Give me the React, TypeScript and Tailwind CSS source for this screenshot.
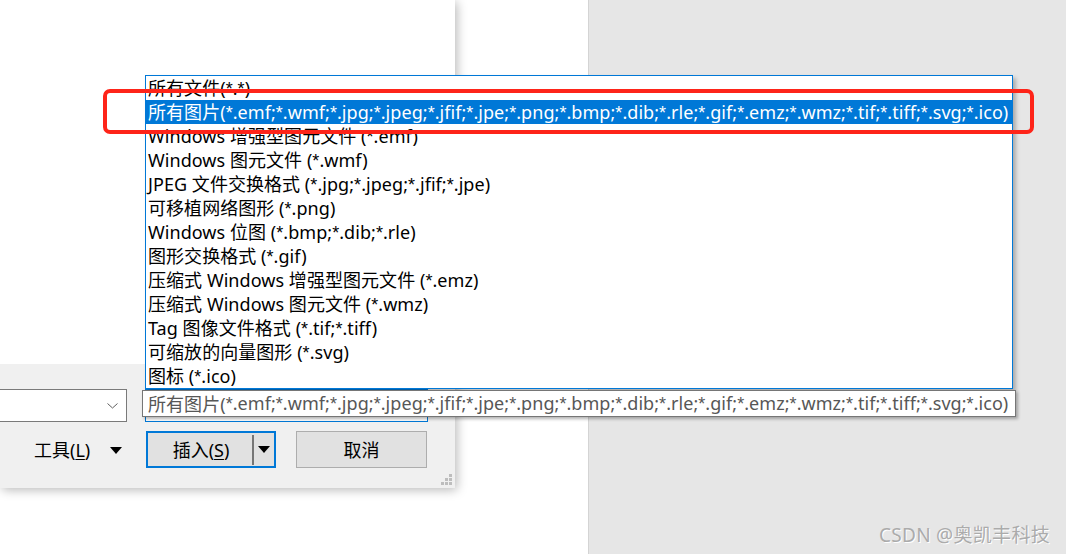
const FONT = 'font-["Noto_Sans","Noto_Sans_CJK_SC",sans-serif]'

const ALL_IMAGES =
  '所有图片(*.emf;*.wmf;*.jpg;*.jpeg;*.jfif;*.jpe;*.png;*.bmp;*.dib;*.rle;*.gif;*.emz;*.wmz;*.tif;*.tiff;*.svg;*.ico)'

const TYPES = [
  '所有文件(*.*)',
  ALL_IMAGES,
  'Windows 增强型图元文件 (*.emf)',
  'Windows 图元文件 (*.wmf)',
  'JPEG 文件交换格式 (*.jpg;*.jpeg;*.jfif;*.jpe)',
  '可移植网络图形 (*.png)',
  'Windows 位图 (*.bmp;*.dib;*.rle)',
  '图形交换格式 (*.gif)',
  '压缩式 Windows 增强型图元文件 (*.emz)',
  '压缩式 Windows 图元文件 (*.wmz)',
  'Tag 图像文件格式 (*.tif;*.tiff)',
  '可缩放的向量图形 (*.svg)',
  '图标 (*.ico)',
]

// the UI font has a narrow asterisk, Noto's is much wider
function Label({ text }: { text: string }) {
  const parts = text.split('*')
  return (
    <>
      {parts.map((p, i) => (
        <span key={i}>
          {i > 0 && <span className='font-["Liberation_Sans",sans-serif]'>*</span>}
          {p}
        </span>
      ))}
    </>
  )
}

function Caret({ className = '' }: { className?: string }) {
  return (
    <svg width="12" height="7" viewBox="0 0 12 7" className={className}>
      <path d="M0 0h12L6 7z" fill="#000" />
    </svg>
  )
}

function Grip() {
  const dots = [
    [8, 0],
    [4, 4], [8, 4],
    [0, 8], [4, 8], [8, 8],
  ]
  return (
    <svg width="11" height="11" viewBox="0 0 11 11">
      {dots.map(([x, y], i) => (
        <rect key={i} x={x} y={y} width="3" height="3" fill="#bdbdbd" />
      ))}
    </svg>
  )
}

export default function App() {
  return (
    <div className={`relative w-[1066px] h-[554px] overflow-hidden flex bg-white text-[18px] ${FONT}`}>
      {/* word window behind the dialog */}
      <div className="w-[588px] h-full bg-white relative">
        <div className="w-[455px] h-[488px] flex flex-col bg-white shadow-[2px_2px_10px_rgba(0,0,0,0.28)]">
          <div className="flex-1" />
          {/* dialog footer */}
          <div className="h-[124px] bg-[#f0f0f0] pt-[25px] relative">
            <div className="flex items-stretch h-[33px]">
              <div className="w-[127px] border-y border-r border-[#7a7a7a] bg-white flex items-center justify-end pr-[8px]">
                <svg width="11" height="6" viewBox="0 0 11 6">
                  <path d="M0.5 0.5L5.5 5L10.5 0.5" fill="none" stroke="#606060" strokeWidth="1" />
                </svg>
              </div>
              <div className="ml-[18px] w-[283px] border border-[#0078d7] bg-white" />
            </div>
            <div className="flex items-center h-[37px] mt-[9px]">
              <div className="w-[146px] flex items-center pl-[34px]">
                <span className="text-black leading-none">
                  工具(<span className="underline underline-offset-2">L</span>)
                </span>
                <Caret className="ml-[20px] mt-[1px]" />
              </div>
              <div className="w-[130px] h-full border-2 border-[#0078d7] bg-[#e1e1e1] flex items-center">
                <div className="flex-1 text-center leading-none text-black pl-[2px]">
                  插入(<span className="underline underline-offset-2">S</span>)
                </div>
                <div className="w-[2px] h-[30px] bg-[#767676]" />
                <div className="w-[20px] flex justify-center">
                  <Caret />
                </div>
              </div>
              <div className="ml-[20px] w-[131px] h-full border border-[#adadad] bg-[#e1e1e1] flex items-center justify-center text-black leading-none">
                取消
              </div>
            </div>
            <div className="absolute right-[3px] bottom-[3px] flex">
              <Grip />
            </div>
          </div>
        </div>
      </div>

      <div className="flex-1 h-full bg-[#e6e6e6] border-l border-[#d4d4d4] flex items-end justify-end pr-[16px] pb-[5px]">
        <span className="text-[19px] text-[#ababab] [text-shadow:1px_1px_0_#ffffff] tracking-[0.3px]">
          CSDN @奥凯丰科技
        </span>
      </div>

      {/* opened file type list */}
      <div className="absolute left-[145px] top-[75px] w-[868px] h-[314px] border border-[#0078d7] bg-white shadow-[3px_3px_4px_rgba(0,0,0,0.25)] tracking-[0.05px]">
        {TYPES.map((t, i) => (
          <div
            key={t}
            className={`h-[24px] flex items-center pl-[2px] whitespace-nowrap leading-none ${
              i === 1 ? 'bg-[#0078d7] text-white' : 'text-black'
            }`}
          >
            <Label text={t} />
          </div>
        ))}
      </div>

      {/* tooltip over the combo */}
      <div className="absolute left-[142px] top-[390px] w-[874px] h-[27px] border border-[#767676] bg-white flex items-center pl-[5px] text-[#575757] whitespace-nowrap leading-none tracking-[0.05px] shadow-[2px_2px_3px_rgba(0,0,0,0.3)]">
        <Label text={ALL_IMAGES} />
      </div>

      {/* red annotation */}
      <div className="absolute left-[103px] top-[89px] w-[931px] h-[45px] border-[4px] border-[#fe2419] rounded-[7px]" />
    </div>
  )
}
